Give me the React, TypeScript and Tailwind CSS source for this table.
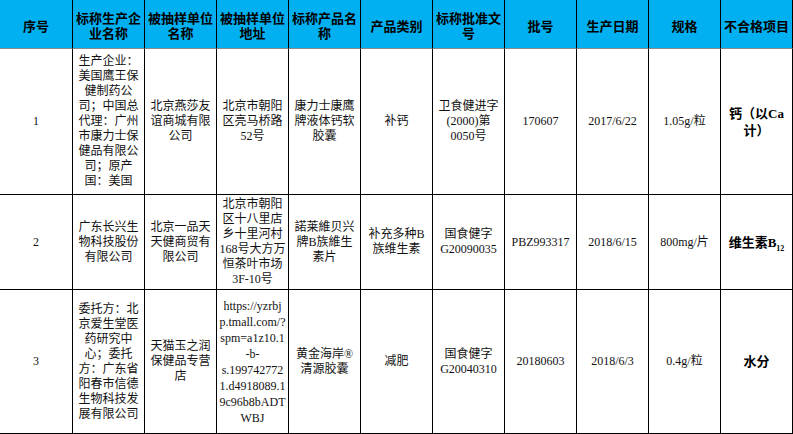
import type { ReactNode } from "react"

const headers: string[][] = [
  ["序号"],
  ["标称生产企", "业名称"],
  ["被抽样单位", "名称"],
  ["被抽样单位", "地址"],
  ["标称产品名", "称"],
  ["产品类别"],
  ["标称批准文", "号"],
  ["批号"],
  ["生产日期"],
  ["规格"],
  ["不合格项目"],
]

type Row = {
  height: string
  cells: string[][]
  failed: ReactNode
}

const rows: Row[] = [
  {
    height: "h-[146px]",
    cells: [
      ["1"],
      ["生产企业：", "美国鹰王保", "健制药公", "司；中国总", "代理：广州", "市康力士保", "健品有限公", "司；原产", "国：美国"],
      ["北京燕莎友", "谊商城有限", "公司"],
      ["北京市朝阳", "区亮马桥路", "52号"],
      ["康力士康鹰", "牌液体钙软", "胶囊"],
      ["补钙"],
      ["卫食健进字", "(2000)第", "0050号"],
      ["170607"],
      ["2017/6/22"],
      ["1.05g/粒"],
    ],
    failed: (
      <>
        <div>钙（以Ca</div>
        <div>计）</div>
      </>
    ),
  },
  {
    height: "h-[95px]",
    cells: [
      ["2"],
      ["广东长兴生", "物科技股份", "有限公司"],
      ["北京一品天", "天健商贸有", "限公司"],
      ["北京市朝阳", "区十八里店", "乡十里河村", "168号大方万", "恒茶叶市场", "3F-10号"],
      ["諾莱維贝兴", "牌B族維生", "素片"],
      ["补充多种B", "族维生素"],
      ["国食健字", "G20090035"],
      ["PBZ993317"],
      ["2018/6/15"],
      ["800mg/片"],
    ],
    failed: (
      <div>
        维生素B<sub className="text-[8px] align-[-2px]">12</sub>
      </div>
    ),
  },
  {
    height: "h-[144px]",
    cells: [
      ["3"],
      ["委托方：北", "京爱生堂医", "药研究中", "心；委托", "方：广东省", "阳春市信德", "生物科技发", "展有限公司"],
      ["天猫玉之润", "保健品专营", "店"],
      ["https://yzrbj", "p.tmall.com/?", "spm=a1z10.1", "-b-", "s.199742772", "1.d4918089.1", "9c96b8bADT", "WBJ"],
      ["黄金海岸®", "清源胶囊"],
      ["减肥"],
      ["国食健字", "G20040310"],
      ["20180603"],
      ["2018/6/3"],
      ["0.4g/粒"],
    ],
    failed: <div>水分</div>,
  },
]

export default function App() {
  return (
    <div className="w-[793px] h-[434px] bg-white overflow-hidden font-['Liberation_Serif','Noto_Sans_CJK_SC',serif] text-[#111]">
      <div className="grid grid-cols-[73px_repeat(10,72px)]">
        {headers.map((lines, i) => (
          <div
            key={i}
            className="h-[49px] bg-[#00B0F0] border-r border-b border-r-black border-b-[#8a8a8a] flex flex-col items-center justify-center text-center text-[13px] leading-[15px] font-bold font-['Noto_Sans_CJK_SC',sans-serif] text-black pt-[2px]"
          >
            {lines.map((l) => (
              <div key={l} className="whitespace-nowrap">
                {l}
              </div>
            ))}
          </div>
        ))}

        {rows.map((row, r) => (
          <Cells key={r} row={row} />
        ))}
      </div>
    </div>
  )
}

function Cells({ row }: { row: Row }) {
  return (
    <>
      {row.cells.map((lines, c) => (
        <div
          key={c}
          className={`${row.height} border-r border-b border-black flex flex-col items-center justify-center text-center text-[12px] ${
            c === 3 && lines[0].startsWith("https") ? "leading-[16px]" : "leading-[15px]"
          }`}
        >
          {lines.map((l, i) => (
            <div key={i} className="whitespace-nowrap">
              {l}
            </div>
          ))}
        </div>
      ))}
      <div
        className={`${row.height} border-r border-b border-black flex flex-col items-center justify-center text-center text-[13px] leading-[17px] font-bold text-black`}
      >
        {row.failed}
      </div>
    </>
  )
}
